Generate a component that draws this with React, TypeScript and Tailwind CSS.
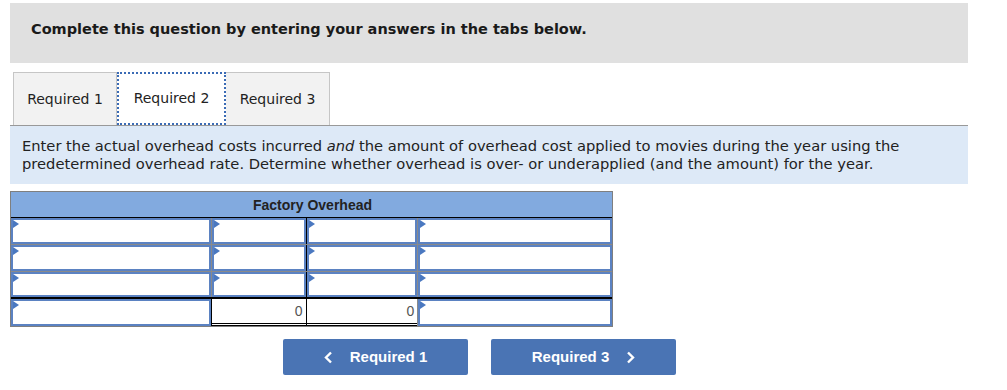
import React from "react";

const Tri = () => (
  <span className="absolute left-0 top-0 w-0 h-0 border-t-[4px] border-b-[4px] border-l-[6px] border-t-transparent border-b-transparent border-l-[#4a78c0]" />
);

const InputCell = ({ w }: { w: string }) => (
  <div className={`relative ${w} h-full border-2 border-[#5b82c2] bg-white`}>
    <Tri />
  </div>
);

export default function App() {
  const verdana = { fontFamily: "Verdana, 'DejaVu Sans', sans-serif" };
  return (
    <div className="w-[1007px] h-[390px] bg-white pl-[10px] pt-[3px]" style={verdana}>
      <div className="w-[958px] h-[60px] bg-[#e0e0e0] pl-[21px] pt-[14px]">
        <span className="text-[14.5px] leading-[18px] font-bold text-[#1a1a1a]">
          Complete this question by entering your answers in the tabs below.
        </span>
      </div>
      <div className="mt-[9px] ml-[3px] flex h-[53px] text-[14px] text-[#222]">
        <div className="w-[104px] bg-[#f2f2f2] border border-b-0 border-[#c6c6c6] flex items-center justify-center">
          Required 1
        </div>
        <div className="w-[109px] bg-white border-2 border-dotted border-[#3b6bb5] flex items-center justify-center">
          Required 2
        </div>
        <div className="w-[104px] bg-[#f2f2f2] border border-b-0 border-l-0 border-[#c6c6c6] flex items-center justify-center">
          Required 3
        </div>
      </div>
      <div className="w-[958px] h-[59px] bg-[#dde9f7] border-t border-[#999] pl-[12px] pt-[11px] text-[14.7px] leading-[18px] text-[#222]">
        Enter the actual overhead costs incurred <i>and</i> the amount of overhead cost applied to movies during the year using the
        <br />
        predetermined overhead rate. Determine whether overhead is over- or underapplied (and the amount) for the year.
      </div>
      <div
        className="mt-[7px] w-[603px] border border-[#7f7f7f]"
        style={{ fontFamily: "Arial, 'Liberation Sans', sans-serif" }}
      >
        <div className="h-[26px] bg-[#82aadf] border-b border-black flex items-center justify-center pt-[1px] pl-[2px] text-[14px] font-bold text-[#222]">
          Factory Overhead
        </div>
        {[0, 1, 2].map((i) => (
          <div
            key={i}
            className={`flex h-[27px] ${i === 2 ? "border-b-2 border-black" : "border-b border-[#8a8a8a]"}`}
          >
            <InputCell w="w-[200px]" />
            <div className="w-px bg-[#8a8a8a]" />
            <InputCell w="w-[94px]" />
            <div className="w-px bg-black" />
            <InputCell w="w-[111px]" />
            <div className="w-px bg-[#8a8a8a]" />
            <InputCell w="w-[194px]" />
          </div>
        ))}
        <div className="flex h-[27px]">
          <InputCell w="w-[200px]" />
          <div className="w-px bg-black" />
          <div className="w-[94px] h-[27px] border-b-[3px] border-double border-black flex items-center justify-end pr-[3px] text-[14px] text-[#555]">
            0
          </div>
          <div className="w-px h-[27px] bg-black" />
          <div className="w-[111px] h-[27px] border-b-[3px] border-double border-black flex items-center justify-end pr-[3px] text-[14px] text-[#555]">
            0
          </div>
          <div className="w-px bg-[#8a8a8a]" />
          <InputCell w="w-[194px]" />
        </div>
      </div>
      <div
        className="mt-[12px] ml-[273px] flex gap-[23px]"
        style={{ fontFamily: "Arial, 'Liberation Sans', sans-serif" }}
      >
        <button className="w-[185px] h-[36px] bg-[#4a74b4] rounded-[2px] text-white text-[15px] font-bold flex items-center justify-center gap-[17px]">
          <svg width="9" height="13" viewBox="0 0 9 13">
            <path d="M7 1.5 L2 6.5 L7 11.5" stroke="white" strokeWidth="2.4" fill="none" />
          </svg>
          Required 1
        </button>
        <button className="w-[185px] h-[36px] bg-[#4a74b4] rounded-[2px] text-white text-[15px] font-bold flex items-center justify-center gap-[17px]">
          Required 3
          <svg width="9" height="13" viewBox="0 0 9 13">
            <path d="M2 1.5 L7 6.5 L2 11.5" stroke="white" strokeWidth="2.4" fill="none" />
          </svg>
        </button>
      </div>
    </div>
  );
}
